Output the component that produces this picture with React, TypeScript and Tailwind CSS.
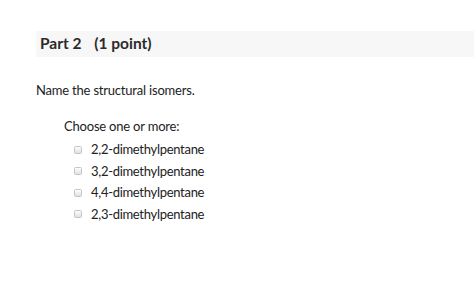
const options = [
  "2,2-dimethylpentane",
  "3,2-dimethylpentane",
  "4,4-dimethylpentane",
  "2,3-dimethylpentane",
];

export default function App() {
  return (
    <div className="w-[474px] h-[282px] bg-white pt-[31px] pl-[36px] text-[#222] font-['Lato','Liberation_Sans',sans-serif]">
      <div className="h-[26px] bg-[#f7f7f7] pl-[4px] flex items-center">
        <h2 className="text-[15.5px] font-bold text-[#2b2b2b]">
          Part 2 <span className="ml-[9px]">(1 point)</span>
        </h2>
      </div>
      <p className="mt-[24px] text-[13px] leading-[18px] tracking-[-0.2px]">Name the structural isomers.</p>
      <div className="mt-[18px] pl-[28px]">
        <p className="text-[13px] leading-[18px] tracking-[-0.2px]">Choose one or more:</p>
        <div className="mt-[4px] pl-[10px] flex flex-col">
          {options.map((o) => (
            <label key={o} className="h-[21.5px] flex items-center gap-[9px] text-[13px] tracking-[-0.3px]">
              <span className="w-[8px] h-[8px] rounded-[1.5px] border border-[#c4c4c4] bg-gradient-to-b from-white to-[#e0e0e0]" />
              {o}
            </label>
          ))}
        </div>
      </div>
    </div>
  );
}
